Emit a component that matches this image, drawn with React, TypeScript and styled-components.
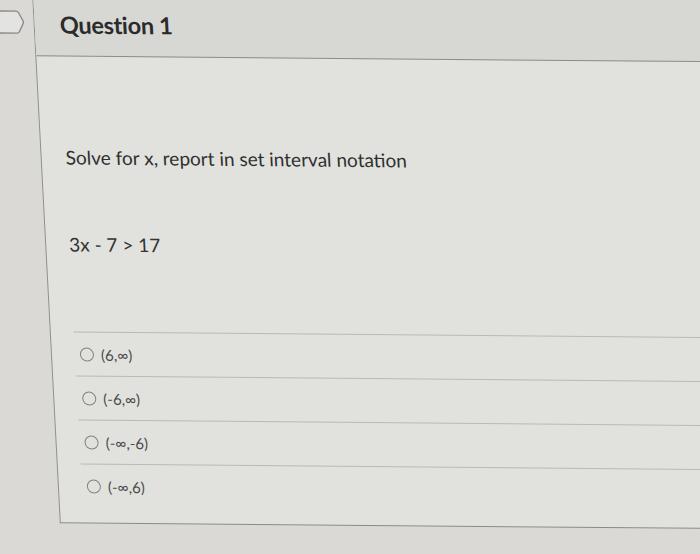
import React from "react";
import styled, { createGlobalStyle } from "styled-components";

const Global = createGlobalStyle`
  html, body {
    margin: 0;
    padding: 0;
    background: #dad9d6;
  }
  * { box-sizing: border-box; }
`;

const Viewport = styled.main`
  width: 700px;
  height: 554px;
  overflow: hidden;
`;

const Stage = styled.div`
  display: flex;
  width: 700px;
  margin-top: -8px;
  transform: skew(3deg, 0.5deg);
  transform-origin: 0 0;
  font-family: Lato, "Open Sans", sans-serif;
  color: #2f2f2f;
`;

const Gutter = styled.div`
  flex: none;
  width: 32px;
  padding-top: 18px;
`;

const Card = styled.section`
  flex: 1;
  margin-right: -60px;
  border-left: 1px solid #8f8f8d;
  border-bottom: 1px solid #8a8a88;
  background: #e1e1de;
`;

const Header = styled.header`
  height: 64px;
  padding: 17px 0 0 25px;
  background: #d7d7d4;
  border-bottom: 1px solid #8c8c8a;
`;

const Title = styled.h1`
  margin: 0;
  font-size: 23.5px;
  line-height: 30px;
  font-weight: 700;
  color: #2b2b2b;
  letter-spacing: -0.3px;
`;

const Body = styled.div`
  padding: 89px 0 15px 24px;
`;

const Prompt = styled.p`
  margin: 0;
  font-size: 19px;
  line-height: 23px;
  color: #2f2f2f;
`;

const Equation = styled.p`
  margin: 64px 0 0 -1px;
  font-size: 19px;
  line-height: 23px;
  color: #333;
`;

const Options = styled.ul`
  list-style: none;
  margin: 76px 0 0 -1px;
  padding: 0;
`;

const Option = styled.li`
  display: flex;
  align-items: center;
  gap: 7px;
  height: 44px;
  padding-left: 5px;
  border-top: 1px solid #b9b9b6;
  font-size: 15px;
  color: #4a4a4a;
`;

const Radio = styled.span`
  flex: none;
  width: 14px;
  height: 14px;
  border-radius: 50%;
  border: 1.7px solid #82827f;
`;

const FlagTab = () => (
  <svg width="24" height="24" viewBox="0 0 24 24" style={{ display: "block", overflow: "visible" }}>
    <path
      d="M-4 1 H15 Q16.5 1 17.3 2.4 L21.5 10.6 Q22 12 21.5 13.4 L17.3 21.6 Q16.5 23 15 23 H-4 Z"
      fill="#e3e3e1"
      stroke="#8a8a88"
      strokeWidth="1.4"
    />
  </svg>
);

const options = ["(6,∞)", "(-6,∞)", "(-∞,-6)", "(-∞,6)"];

export default function App() {
  return (
    <>
      <Global />
      <Viewport>
        <Stage>
          <Gutter>
            <FlagTab />
          </Gutter>
          <Card>
            <Header>
              <Title>Question 1</Title>
            </Header>
            <Body>
              <Prompt>Solve for x, report in set interval notation</Prompt>
              <Equation>3x - 7 &gt; 17</Equation>
              <Options>
                {options.map((o) => (
                  <Option key={o}>
                    <Radio />
                    <span>{o}</span>
                  </Option>
                ))}
              </Options>
            </Body>
          </Card>
        </Stage>
      </Viewport>
    </>
  );
}
